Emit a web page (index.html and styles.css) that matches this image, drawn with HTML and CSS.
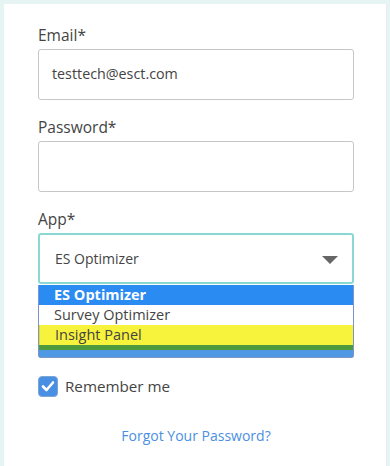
FILE: index.html
```html
<!DOCTYPE html>
<html lang="en">
<head>
    <meta charset="UTF-8">
    <meta name="viewport" content="width=device-width, initial-scale=1.0">
    <title>Login</title>
    <link rel="stylesheet" href="styles.css">
</head>
<body>
    <div class="login-card">
        <form class="login-form">
            <div class="field">
                <label class="field-label">Email*</label>
                <div class="text-input">testtech@esct.com</div>
            </div>

            <div class="field">
                <label class="field-label">Password*</label>
                <div class="text-input"></div>
            </div>

            <div class="field">
                <label class="field-label">App*</label>
                <div class="select-box">
                    <span>ES Optimizer</span>
                    <span class="select-arrow"></span>
                </div>
                <!-- Open dropdown list -->
                <div class="select-list">
                    <div class="select-option selected">ES Optimizer</div>
                    <div class="select-option">Survey Optimizer</div>
                    <div class="select-option hover">Insight Panel</div>
                    <div class="select-tail"></div>
                </div>
            </div>

            <label class="remember">
                <span class="checkbox">
                    <svg width="14" height="12" viewBox="0 0 14 12">
                        <path d="M2 6.5 L5.5 10 L12 2.5" fill="none" stroke="#ffffff" stroke-width="2.6" stroke-linecap="round" stroke-linejoin="round"/>
                    </svg>
                </span>
                Remember me
            </label>

            <a href="#" class="forgot-link">Forgot Your Password?</a>
        </form>
    </div>
</body>
</html>
```

FILE: styles.css
```css
* {
    margin: 0;
    padding: 0;
    box-sizing: border-box;
}

body {
    font-family: 'Open Sans', 'Noto Sans', sans-serif;
    background-color: #e6f5f4;
    color: #444444;
    padding: 4px 3px 0 4px;
    height: 466px;
    overflow: hidden;
}

.login-card {
    background-color: #ffffff;
    height: 100%;
    border-right: 1px solid #e4ecec;
    padding: 21px 32px 0 34px;
}

.login-form {
    display: flex;
    flex-direction: column;
}

.field {
    margin-bottom: 17px;
}

.field-label {
    display: block;
    font-size: 15.5px;
    line-height: 21px;
    margin-bottom: 3px;
    color: #444444;
}

.text-input {
    height: 51px;
    border: 1.5px solid #c6c6c6;
    border-radius: 3px;
    padding: 0 13px;
    font-size: 14.3px;
    line-height: 48px;
    color: #444444;
}

.select-box {
    height: 51px;
    border: 2px solid #8ad8d4;
    border-radius: 3px;
    padding: 0 14px 0 15px;
    display: flex;
    align-items: center;
    justify-content: space-between;
    font-size: 14px;
    color: #444444;
}

.select-arrow {
    width: 0;
    height: 0;
    border-left: 8px solid transparent;
    border-right: 8px solid transparent;
    border-top: 8px solid #666666;
    margin-top: 2px;
}

.select-list {
    margin-top: 1px;
    border: 1px solid #7d93cc;
    border-top: none;
    border-radius: 0 0 3px 3px;
    overflow: hidden;
    background-color: #4f98e3;
    font-size: 14.5px;
    line-height: 20px;
}

.select-option {
    padding-left: 15px;
    background-color: #ffffff;
    color: #444444;
}

.select-option.selected {
    background-color: #2a8bf2;
    color: #ffffff;
    font-weight: bold;
}

.select-option.hover {
    background-color: #f7f23b;
    border-left: 1px solid #e0dc20;
}

.select-tail {
    height: 12px;
    border-top: 5px solid #4f9a3c;
    background-color: #4f98e3;
}

.remember {
    display: flex;
    align-items: center;
    gap: 7px;
    font-size: 15.2px;
    line-height: 22px;
    color: #444444;
}

.checkbox {
    width: 20px;
    height: 21px;
    border-radius: 4px;
    background-color: #4a90e2;
    border: 1px solid #7aa6d8;
    display: flex;
    align-items: center;
    justify-content: center;
}

.forgot-link {
    align-self: center;
    margin-top: 29px;
    font-size: 14px;
    color: #4a90e2;
    text-decoration: none;
}
```
